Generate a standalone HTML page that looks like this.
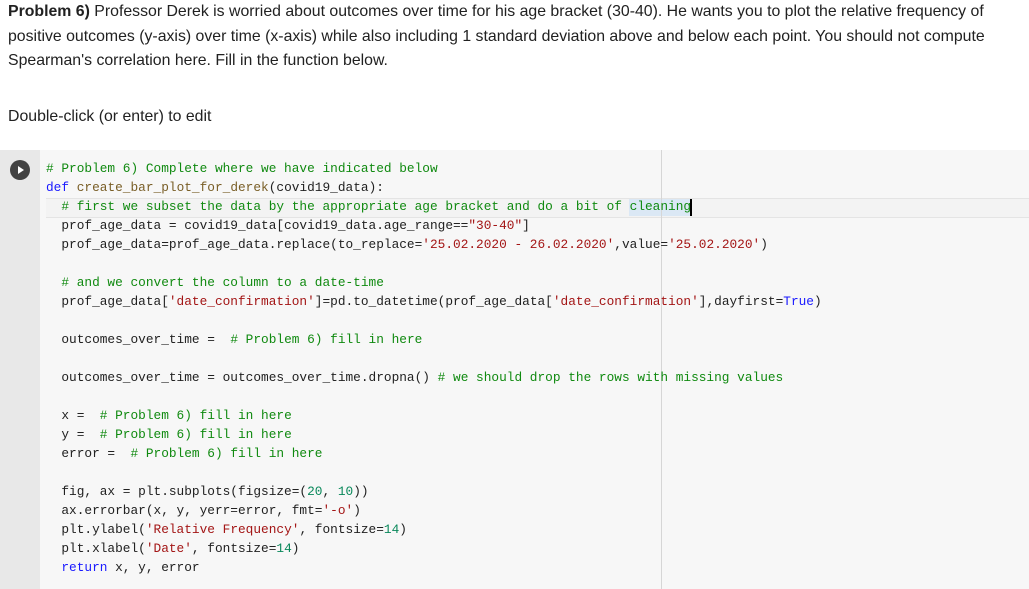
<!DOCTYPE html>
<html><head><style>
body{margin:0;width:1029px;height:589px;overflow:hidden;background:#fff;font-family:"Liberation Sans",sans-serif;position:relative}
.t{position:absolute;left:8px;top:0;font-size:15.85px;line-height:24.5px;color:#212121;width:1015px}
.d{position:absolute;left:8px;top:108px;font-size:15.85px;color:#212121}
.gut{position:absolute;left:0;top:150px;width:40px;height:439px;background:#e8e8e8}
.code{position:absolute;left:40px;top:150px;width:989px;height:439px;background:#f7f7f7}
.ruler{position:absolute;left:661px;top:150px;width:1px;height:439px;background:#d6d6d6}
.hl{position:absolute;left:46px;top:198px;width:983px;height:18px;border-top:1px solid #e4e4e4;border-bottom:1px solid #e4e4e4;background:#f3f3f3}
.sel{position:absolute;left:629px;top:199px;width:61px;height:17px;background:#dbe8f5}
.cur{position:absolute;left:690px;top:199px;width:2px;height:17px;background:#000}
.play{position:absolute;left:10px;top:160px;width:20px;height:20px;border-radius:50%;background:#424242}
.play:after{content:"";position:absolute;left:8px;top:6px;border-left:6px solid #fff;border-top:4px solid transparent;border-bottom:4px solid transparent}
pre{position:absolute;left:46px;top:159px;margin:0;font-family:"Liberation Mono",monospace;font-size:12.8px;line-height:19px;color:#212121}
.c{color:#108a10}.k{color:#1a1aff}.s{color:#a31515}.n{color:#09885a}.f{color:#795e26}
</style></head><body>
<div class="t"><b>Problem 6)</b> Professor Derek is worried about outcomes over time for his age bracket (30-40). He wants you to plot the relative frequency of positive outcomes (y-axis) over time (x-axis) while also including 1 standard deviation above and below each point. You should not compute Spearman's correlation here. Fill in the function below.</div>
<div class="d">Double-click (or enter) to edit</div>
<div class="gut"></div><div class="code"></div>
<div class="hl"></div><div class="sel"></div><div class="cur"></div>
<div class="ruler"></div>
<div class="play"></div>
<pre><span class="c"># Problem 6) Complete where we have indicated below</span>
<span class="k">def</span> <span class="f">create_bar_plot_for_derek</span>(covid19_data):
  <span class="c"># first we subset the data by the appropriate age bracket and do a bit of cleaning</span>
  prof_age_data = covid19_data[covid19_data.age_range==<span class="s">"30-40"</span>]
  prof_age_data=prof_age_data.replace(to_replace=<span class="s">'25.02.2020 - 26.02.2020'</span>,value=<span class="s">'25.02.2020'</span>)

  <span class="c"># and we convert the column to a date-time</span>
  prof_age_data[<span class="s">'date_confirmation'</span>]=pd.to_datetime(prof_age_data[<span class="s">'date_confirmation'</span>],dayfirst=<span class="k">True</span>)

  outcomes_over_time =  <span class="c"># Problem 6) fill in here</span>

  outcomes_over_time = outcomes_over_time.dropna() <span class="c"># we should drop the rows with missing values</span>

  x =  <span class="c"># Problem 6) fill in here</span>
  y =  <span class="c"># Problem 6) fill in here</span>
  error =  <span class="c"># Problem 6) fill in here</span>

  fig, ax = plt.subplots(figsize=(<span class="n">20</span>, <span class="n">10</span>))
  ax.errorbar(x, y, yerr=error, fmt=<span class="s">'-o'</span>)
  plt.ylabel(<span class="s">'Relative Frequency'</span>, fontsize=<span class="n">14</span>)
  plt.xlabel(<span class="s">'Date'</span>, fontsize=<span class="n">14</span>)
  <span class="k">return</span> x, y, error</pre>
</body></html>
